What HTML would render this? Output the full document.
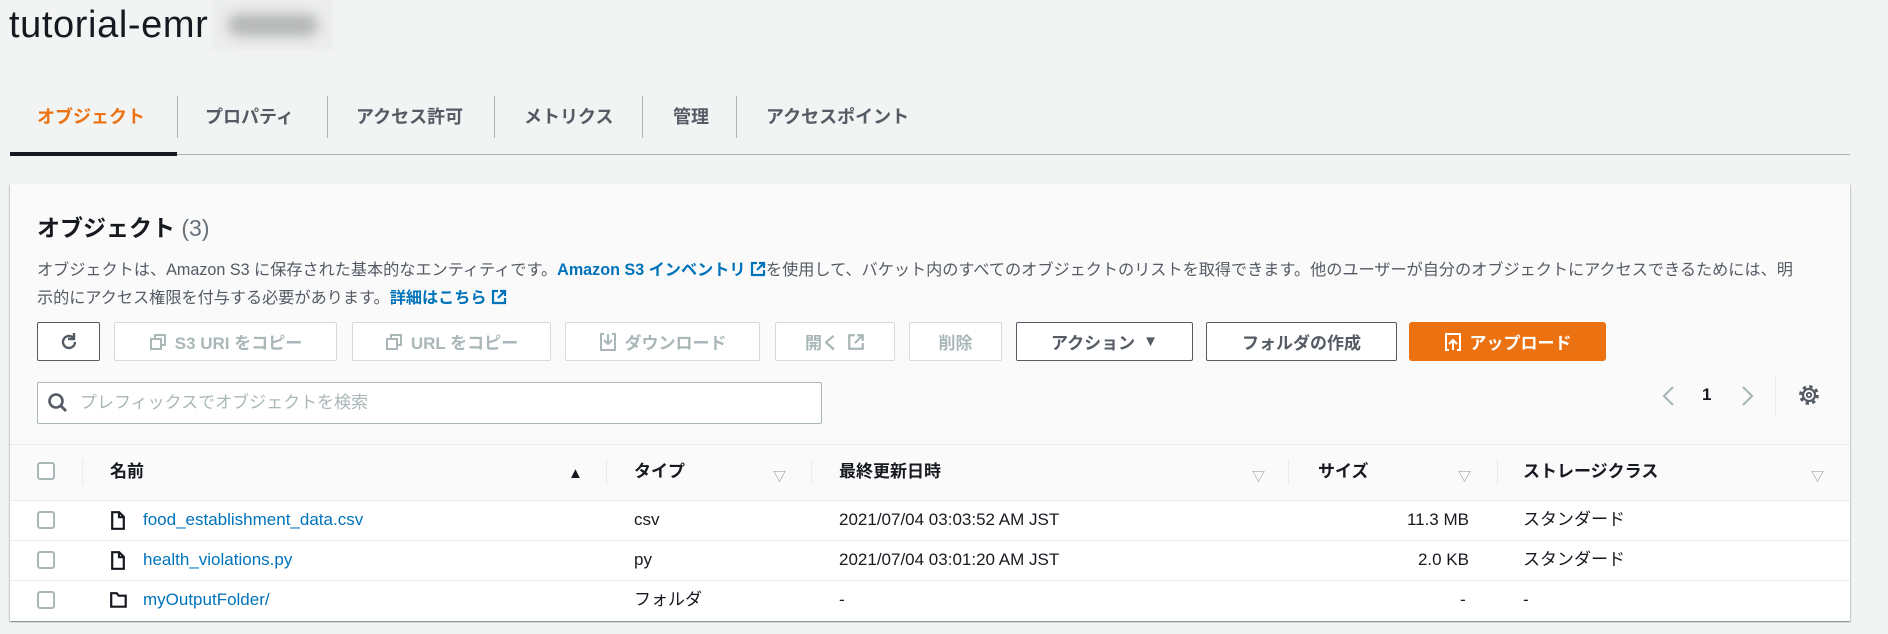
<!DOCTYPE html>
<html><head><meta charset="utf-8"><style>
*{box-sizing:border-box;margin:0;padding:0}
body{width:1888px;height:634px;background:#f2f3f3;font-family:"Liberation Sans","Noto Sans CJK JP",sans-serif;position:relative;overflow:hidden;color:#16191f}
.a{position:absolute;white-space:nowrap}
.tab{position:absolute;top:104px;font-size:18px;font-weight:bold;color:#545b64;line-height:26px}
.tdiv{position:absolute;top:96px;width:1px;height:42px;background:#aab7b8}
.btn{position:absolute;top:322px;height:39px;border:1px solid #d5dbdb;border-radius:2px;background:#fff;color:#aab7b8;font-size:17px;font-weight:bold;display:flex;align-items:center;justify-content:center;gap:8px}
.btn.n{border-color:#545b64;color:#545b64}
.hd{position:absolute;top:459px;font-size:17px;font-weight:bold;line-height:26px;color:#16191f}
.cd{position:absolute;top:459px;width:1px;height:26px;background:#eaeded}
.tri{position:absolute;top:466px;font-size:13px;color:#879596}
.cb{position:absolute;left:37px;width:18px;height:18px;border:2px solid #aab7b8;border-radius:3px;background:#fff}
.row{position:absolute;left:10px;width:1840px;height:40px;background:#fff;border-top:1px solid #eaeded}
.c{position:absolute;font-size:17px;line-height:24px;color:#16191f}
.lk{color:#0073bb}
</style></head><body>
<div class="a" style="left:9px;top:3px;font-size:38px;letter-spacing:0.6px;line-height:44px;color:#16191f">tutorial-emr</div>
<div class="a" style="left:213px;top:0;width:120px;height:50px;background:#eceded;filter:blur(1px)"><div style="position:absolute;left:15px;top:14px;width:90px;height:22px;background:#b4b6b7;border-radius:11px;filter:blur(6px)"></div></div>

<div class="tab" style="left:37px;color:#ec7211">オブジェクト</div>
<div class="tdiv" style="left:177px"></div>
<div class="tab" style="left:205px">プロパティ</div>
<div class="tdiv" style="left:327px"></div>
<div class="tab" style="left:356px">アクセス許可</div>
<div class="tdiv" style="left:494px"></div>
<div class="tab" style="left:524px">メトリクス</div>
<div class="tdiv" style="left:642px"></div>
<div class="tab" style="left:673px">管理</div>
<div class="tdiv" style="left:736px"></div>
<div class="tab" style="left:766px">アクセスポイント</div>
<div class="a" style="left:10px;top:154px;width:1840px;height:1px;background:#aab7b8"></div>
<div class="a" style="left:10px;top:152px;width:167px;height:4px;background:#16191f"></div>

<div class="a" style="left:10px;top:184px;width:1840px;height:437px;background:#fafafa;box-shadow:0 1px 1px rgba(0,28,36,.3),1px 1px 1px rgba(0,28,36,.15),-1px 1px 1px rgba(0,28,36,.15)"></div>
<div class="a" style="left:37px;top:212px;font-size:23px;font-weight:bold;line-height:32px">オブジェクト <span style="font-weight:normal;color:#687078">(3)</span></div>
<div class="a" style="left:37px;top:258px;font-size:16.15px;line-height:24px;color:#545b64">オブジェクトは、Amazon S3 に保存された基本的なエンティティです。<b style="color:#0073bb">Amazon S3 インベントリ <svg width="16" height="16" viewBox="0 0 16 16" style="vertical-align:-2px"><path d="M7 2H2v12h12V9M9 2h5v5M14 2 7 9" fill="none" stroke="#0073bb" stroke-width="2.2"/></svg></b>を使用して、バケット内のすべてのオブジェクトのリストを取得できます。他のユーザーが自分のオブジェクトにアクセスできるためには、明</div>
<div class="a" style="left:37px;top:286px;font-size:16.15px;line-height:24px;color:#545b64">示的にアクセス権限を付与する必要があります。<b style="color:#0073bb">詳細はこちら <svg width="16" height="16" viewBox="0 0 16 16" style="vertical-align:-2px"><path d="M7 2H2v12h12V9M9 2h5v5M14 2 7 9" fill="none" stroke="#0073bb" stroke-width="2.2"/></svg></b></div>

<div class="btn n" style="left:37px;width:63px"><svg width="20" height="20" viewBox="0 0 20 20"><path d="M16 10a6 6 0 1 1-2-4.5" fill="none" stroke="#545b64" stroke-width="2.4"/><path d="M15 1v6H9" fill="none" stroke="#545b64" stroke-width="2.4"/></svg></div>
<div class="btn" style="left:114px;width:223px"><svg width="18" height="18" viewBox="0 0 18 18"><path d="M2 6h10v10H2zM6 6V2h10v10h-4" fill="none" stroke="#aab7b8" stroke-width="2"/></svg>S3 URI をコピー</div>
<div class="btn" style="left:352px;width:199px"><svg width="18" height="18" viewBox="0 0 18 18"><path d="M2 6h10v10H2zM6 6V2h10v10h-4" fill="none" stroke="#aab7b8" stroke-width="2"/></svg>URL をコピー</div>
<div class="btn" style="left:565px;width:195px"><svg width="18" height="20" viewBox="0 0 18 20"><path d="M5 2H2v16h14V2h-3M9 2v10M5 8l4 4 4-4" fill="none" stroke="#aab7b8" stroke-width="2"/></svg>ダウンロード</div>
<div class="btn" style="left:775px;width:120px">開く <svg width="18" height="18" viewBox="0 0 16 16"><path d="M7 2H2v12h12V9M9 2h5v5M14 2 7 9" fill="none" stroke="#aab7b8" stroke-width="2"/></svg></div>
<div class="btn" style="left:909px;width:93px">削除</div>
<div class="btn n" style="left:1016px;width:177px">アクション <span style="font-size:15px">▼</span></div>
<div class="btn n" style="left:1206px;width:191px">フォルダの作成</div>
<div class="btn" style="left:1409px;width:197px;background:#ec7211;border-color:#ec7211;color:#fff;border-radius:3px"><svg width="18" height="20" viewBox="0 0 18 20"><path d="M5 18H2V2h14v16h-3M9 18V8M5 12l4-4 4 4" fill="none" stroke="#fff" stroke-width="2"/></svg>アップロード</div>

<div class="a" style="left:37px;top:382px;width:785px;height:42px;border:1px solid #aab7b8;border-radius:2px;background:#fff"></div>
<svg class="a" style="left:47px;top:392px" width="22" height="22" viewBox="0 0 22 22"><circle cx="9" cy="9" r="6.5" fill="none" stroke="#545b64" stroke-width="2.6"/><path d="M13.5 13.5 19 19" stroke="#545b64" stroke-width="2.8"/></svg>
<div class="a" style="left:80px;top:390px;font-size:17px;line-height:26px;color:#aab7b8">プレフィックスでオブジェクトを検索</div>

<svg class="a" style="left:1661px;top:385px" width="14" height="22" viewBox="0 0 14 22"><path d="M12 2 3 11l9 9" fill="none" stroke="#aab7b8" stroke-width="2.2"/></svg>
<div class="a" style="left:1702px;top:383px;font-size:17px;font-weight:bold;line-height:24px">1</div>
<svg class="a" style="left:1741px;top:385px" width="14" height="22" viewBox="0 0 14 22"><path d="M2 2l9 9-9 9" fill="none" stroke="#aab7b8" stroke-width="2.2"/></svg>
<div class="a" style="left:1775px;top:375px;width:1px;height:40px;background:#eaeded"></div>
<svg class="a" style="left:1798px;top:384px" width="22" height="22" viewBox="0 0 24 24"><circle cx="12" cy="12" r="9.2" fill="none" stroke="#545b64" stroke-width="3.2" stroke-dasharray="3.6 3.62"/><circle cx="12" cy="12" r="6.6" fill="none" stroke="#545b64" stroke-width="2.4"/><circle cx="12" cy="12" r="2.4" fill="none" stroke="#545b64" stroke-width="2"/></svg>

<div class="a" style="left:10px;top:444px;width:1840px;height:1px;background:#eaeded"></div>
<div class="cb" style="top:462px"></div>
<div class="cd" style="left:82px"></div>
<div class="hd" style="left:110px">名前</div>
<div class="a" style="left:568px;top:465px;font-size:15px;color:#16191f">▲</div>
<div class="cd" style="left:606px"></div>
<div class="hd" style="left:634px">タイプ</div>
<div class="tri" style="left:773px">▽</div>
<div class="cd" style="left:811px"></div>
<div class="hd" style="left:839px">最終更新日時</div>
<div class="tri" style="left:1252px">▽</div>
<div class="cd" style="left:1288px"></div>
<div class="hd" style="left:1318px">サイズ</div>
<div class="tri" style="left:1458px">▽</div>
<div class="cd" style="left:1497px"></div>
<div class="hd" style="left:1523px">ストレージクラス</div>
<div class="tri" style="left:1811px">▽</div>

<div class="row" style="top:500px"></div>
<div class="row" style="top:540px"></div>
<div class="row" style="top:580px;height:41px"></div>

<div class="cb" style="top:511px"></div>
<svg class="a" style="left:111px;top:511px" width="14" height="19" viewBox="0 0 14 19"><path d="M1.2 1.2h7l4.6 4.6v12H1.2zM8 1.2v5h5" fill="none" stroke="#16191f" stroke-width="2.2"/></svg>
<div class="c lk" style="left:143px;top:508px">food_establishment_data.csv</div>
<div class="c" style="left:634px;top:508px">csv</div>
<div class="c" style="left:839px;top:508px">2021/07/04 03:03:52 AM JST</div>
<div class="c" style="left:1300px;top:508px;width:169px;text-align:right">11.3 MB</div>
<div class="c" style="left:1523px;top:508px">スタンダード</div>

<div class="cb" style="top:551px"></div>
<svg class="a" style="left:111px;top:551px" width="14" height="19" viewBox="0 0 14 19"><path d="M1.2 1.2h7l4.6 4.6v12H1.2zM8 1.2v5h5" fill="none" stroke="#16191f" stroke-width="2.2"/></svg>
<div class="c lk" style="left:143px;top:548px">health_violations.py</div>
<div class="c" style="left:634px;top:548px">py</div>
<div class="c" style="left:839px;top:548px">2021/07/04 03:01:20 AM JST</div>
<div class="c" style="left:1300px;top:548px;width:169px;text-align:right">2.0 KB</div>
<div class="c" style="left:1523px;top:548px">スタンダード</div>

<div class="cb" style="top:591px"></div>
<svg class="a" style="left:110px;top:592px" width="17" height="16" viewBox="0 0 17 16"><path d="M1.2 1.2h5.5l2 2.5h7v11H1.2z" fill="none" stroke="#16191f" stroke-width="2.2"/></svg>
<div class="c lk" style="left:143px;top:588px">myOutputFolder/</div>
<div class="c" style="left:634px;top:588px">フォルダ</div>
<div class="c" style="left:839px;top:588px">-</div>
<div class="c" style="left:1460px;top:588px">-</div>
<div class="c" style="left:1523px;top:588px">-</div>
</body></html>
